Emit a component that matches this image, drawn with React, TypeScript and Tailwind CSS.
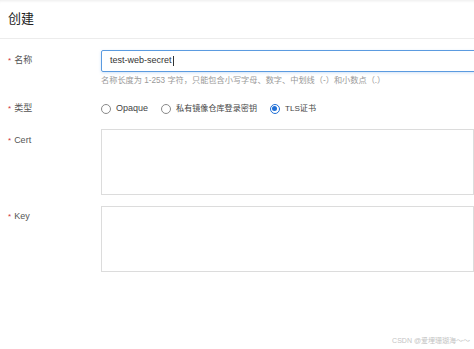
const Label = ({ text }: { text: string }) => (
  <div className="flex w-[101px] shrink-0 items-center pl-[8px] text-[9px] text-[#555]">
    <span className="mr-[3px] text-[8px] text-[#d0343a]">*</span>
    {text}
  </div>
);

const Radio = ({ label, checked, cjk }: { label: string; checked?: boolean; cjk?: boolean }) => (
  <label className={cjk ? 'flex items-center gap-[5px] text-[8.1px] text-[#444]' : 'flex items-center gap-[5px] text-[9px] text-[#444]'}>
    <span
      className={
        checked
          ? 'flex h-[10px] w-[10px] items-center justify-center rounded-full border border-[#1f6fd6] bg-white'
          : 'h-[10px] w-[10px] rounded-full border border-[#8a8a8a] bg-white'
      }
    >
      {checked && <span className="h-[5px] w-[5px] rounded-full bg-[#1f6fd6]" />}
    </span>
    {label}
  </label>
);

export default function App() {
  return (
    <div className="relative h-[349px] w-[474px] overflow-hidden bg-white font-['Liberation_Sans','Noto_Sans_CJK_SC',sans-serif]">
      <div className="flex h-[39px] items-center border-b border-[#ececec] px-[8px] text-[13px] text-[#222] shadow-[inset_0_3px_3px_-2px_rgba(0,0,0,0.08)]">
        创建
      </div>

      <div className="flex flex-col pt-[11px]">
        <div className="flex">
          <div className="flex h-[22px] items-center">
            <Label text="名称" />
          </div>
          <div className="flex flex-col">
            <div className="flex h-[22px] w-[400px] items-center rounded-[2px] border border-[#5b9be0] px-[8px] text-[9px] text-[#333] shadow-[0_1px_3px_rgba(74,144,226,0.25)]">
              test-web-secret<span className="ml-[1px] h-[10px] w-px bg-[#333]" />
            </div>
            <div className="mt-[2px] text-[8.2px] leading-[14px] text-[#999]">
              名称长度为 1-253 字符，只能包含小写字母、数字、中划线（-）和小数点（.）
            </div>
          </div>
        </div>

        <div className="mt-[14px] flex h-[14px] items-center">
          <Label text="类型" />
          <div className="flex items-center gap-[13px]">
            <Radio label="Opaque" />
            <Radio label="私有镜像仓库登录密钥" cjk />
            <Radio label="TLS证书" checked cjk />
          </div>
        </div>

        <div className="mt-[13px] flex">
          <div className="pt-[5px]">
            <Label text="Cert" />
          </div>
          <div className="h-[66px] w-[400px] border border-[#dcdcdc]" />
        </div>

        <div className="mt-[11px] flex">
          <div className="pt-[4px]">
            <Label text="Key" />
          </div>
          <div className="h-[66px] w-[400px] border border-[#dcdcdc]" />
        </div>
      </div>

      <div className="absolute bottom-[3px] right-[4px] text-[7px] text-[#c4c4c4]">
        CSDN @爱埋珊瑚海～～
      </div>
    </div>
  );
}
